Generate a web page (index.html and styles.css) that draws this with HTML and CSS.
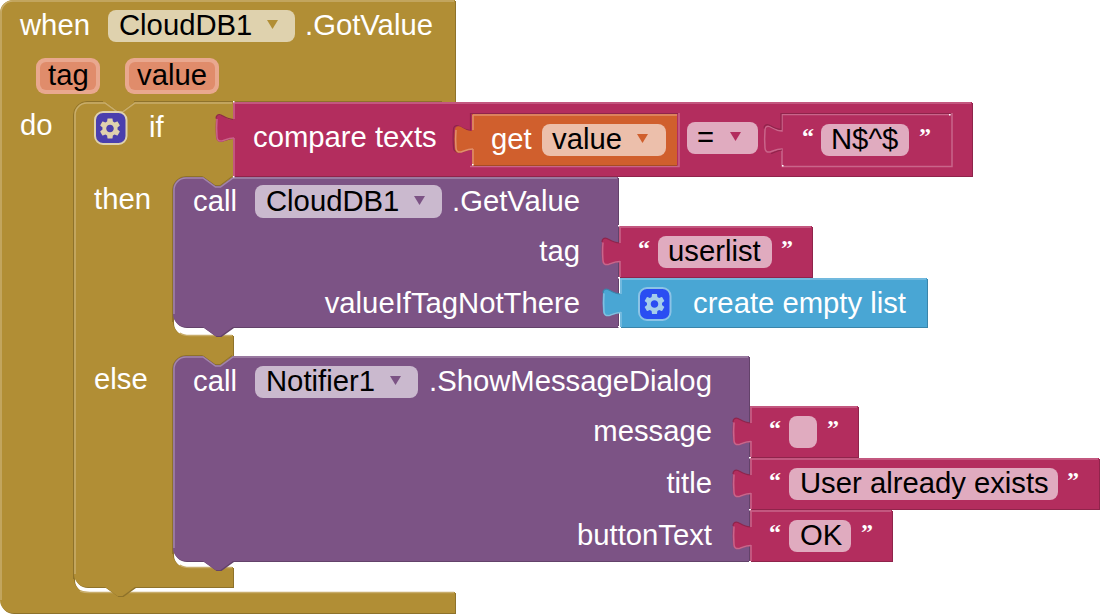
FILE: index.html
```html
<!DOCTYPE html>
<html lang="en">
<head>
<meta charset="utf-8">
<title>CloudDB1.GotValue blocks</title>
<link rel="stylesheet" href="styles.css">
</head>
<body>
<svg class="canvas" width="1100" height="614" viewBox="0 0 1100 614" xmlns="http://www.w3.org/2000/svg">
  <defs>
    <path id="gear" d="M19.14 12.94c.04-.3.06-.61.06-.94 0-.32-.02-.64-.07-.94l2.03-1.58c.18-.14.23-.41.12-.61l-1.92-3.32c-.12-.22-.37-.29-.59-.22l-2.39.96c-.5-.38-1.03-.7-1.62-.94l-.36-2.54c-.04-.24-.24-.41-.48-.41h-3.84c-.24 0-.43.17-.47.41l-.36 2.54c-.59.24-1.13.57-1.62.94l-2.39-.96c-.22-.08-.47 0-.59.22L2.74 8.87c-.12.21-.08.47.12.61l2.03 1.58c-.05.3-.09.63-.09.94s.02.64.07.94l-2.03 1.58c-.18.14-.23.41-.12.61l1.92 3.32c.12.22.37.29.59.22l2.39-.96c.5.38 1.03.7 1.62.94l.36 2.54c.05.24.24.41.48.41h3.84c.24 0 .44-.17.47-.41l.36-2.54c.59-.24 1.13-.56 1.62-.94l2.39.96c.22.08.47 0 .59-.22l1.92-3.32c.12-.22.07-.47-.12-.61l-2.01-1.58zM12 15.6c-1.98 0-3.6-1.62-3.6-3.6s1.62-3.6 3.6-3.6 3.6 1.62 3.6 3.6-1.62 3.6-3.6 3.6z"/>
    <path id="tabLow" d="M0,24 c-5,0 -9,2 -12,3 c-3,.5 -5,-1 -5,-4 c-.5,-6 -.5,-12 0,-18"/>
    <path id="tabUp" d="M-17,5 c0,-3 2,-4.5 5,-3.5 c3,1.5 7,4.5 12,4.5"/>
    <path id="when" d="M0,13 A13,13 0 0 1 13,0 H455 V102 H135 l-12.5,9 h-5 l-12.5,-9 H87 A13,13 0 0 0 74,115 V579 A13,13 0 0 0 87,592 H455 V613 H13 A13,13 0 0 1 0,600 Z"/>
    <path id="ifb" d="M74,115 A13,13 0 0 1 87,102 H105 l12.5,9 h5 l12.5,-9 H233 V177 l-12.5,9 h-5 l-12.5,-9 H186 A13,13 0 0 0 173,190 V322 A13,13 0 0 0 186,335 H233 V356 l-12.5,9 h-5 l-12.5,-9 H186 A13,13 0 0 0 173,369 V554 A13,13 0 0 0 186,567 H233 V587 H135 l-12.5,9 h-5 l-12.5,-9 H87 A13,13 0 0 1 74,574 Z"/>
    <path id="call1" d="M173,190 A13,13 0 0 1 186,177 H203 l12.5,9 h5 l12.5,-9 H618 V327 H233 l-12.5,9 h-5 l-12.5,-9 H186 A13,13 0 0 1 173,314 Z"/>
    <path id="call2" d="M173,369 A13,13 0 0 1 186,356 H203 l12.5,9 h5 l12.5,-9 H749 V561 H233 l-12.5,9 h-5 l-12.5,-9 H186 A13,13 0 0 1 173,548 Z"/>
    <path id="compare" d="M233,102 H972 V176 H233 V138 c-5,0 -9,2 -12,3 c-3,.5 -5,-1 -5,-4 c-.5,-6 -.5,-12 0,-18 c0,-3 2,-4.5 5,-3.5 c3,1.5 7,4.5 12,4.5 Z"/>
    <path id="getb" d="M472,114 H677 V165 H472 V149 c-5,0 -9,2 -12,3 c-3,.5 -5,-1 -5,-4 c-.5,-6 -.5,-12 0,-18 c0,-3 2,-4.5 5,-3.5 c3,1.5 7,4.5 12,4.5 Z"/>
    <path id="userlist" d="M619,226 H812 V277 H619 V261 c-5,0 -9,2 -12,3 c-3,.5 -5,-1 -5,-4 c-.5,-6 -.5,-12 0,-18 c0,-3 2,-4.5 5,-3.5 c3,1.5 7,4.5 12,4.5 Z"/>
    <path id="listb" d="M620,278 H927 V327 H620 V312 c-5,0 -9,2 -12,3 c-3,.5 -5,-1 -5,-4 c-.5,-6 -.5,-12 0,-18 c0,-3 2,-4.5 5,-3.5 c3,1.5 7,4.5 12,4.5 Z"/>
    <path id="msg" d="M750,406 H858 V457 H750 V441 c-5,0 -9,2 -12,3 c-3,.5 -5,-1 -5,-4 c-.5,-6 -.5,-12 0,-18 c0,-3 2,-4.5 5,-3.5 c3,1.5 7,4.5 12,4.5 Z"/>
    <path id="title" d="M750,458 H1099 V509 H750 V493 c-5,0 -9,2 -12,3 c-3,.5 -5,-1 -5,-4 c-.5,-6 -.5,-12 0,-18 c0,-3 2,-4.5 5,-3.5 c3,1.5 7,4.5 12,4.5 Z"/>
    <path id="ok" d="M750,510 H892 V561 H750 V545 c-5,0 -9,2 -12,3 c-3,.5 -5,-1 -5,-4 c-.5,-6 -.5,-12 0,-18 c0,-3 2,-4.5 5,-3.5 c3,1.5 7,4.5 12,4.5 Z"/>
  </defs>

  <!-- when block -->
  <use href="#when" class="gold-dark" transform="translate(1,1)"/>
  <use href="#when" class="gold"/>
  <path class="gold-hl" d="M1,13 A12,12 0 0 1 13,1 H454 M1,13 V600"/>
  <path class="gold-hl" d="M80,591 Q84,592.5 90,592.5 H454"/>
  <path class="gold-edge" d="M134,101.5 H442 M103,101.5 H87 A13.5,13.5 0 0 0 73.5,115 V579"/>

  <!-- if block -->
  <use href="#ifb" class="gold-dark" transform="translate(1,1)"/>
  <use href="#ifb" class="gold"/>
  <path class="gold-hl" d="M75,574 V115 A12,12 0 0 1 87,103 H105 l12.5,9 h5 l12.5,-9 H232"/>
  <path class="gold-hl" d="M180,333 Q183,335.5 190,335.5 H232 M180,565 Q183,567.5 190,567.5 H232"/>
  <path class="gold-edge" d="M232,176.5 l-12,9 h-5 l-12.5,-9 H186 A13.5,13.5 0 0 0 172.5,190 V322 M232,355.5 l-12,9 h-5 l-12.5,-9 H186 A13.5,13.5 0 0 0 172.5,369 V554"/>

  <text class="t t-w" x="20" y="35">when</text>
  <rect class="fld-gold" x="108" y="10" width="187" height="32" rx="8"/>
  <text class="t t-b" x="119" y="35">CloudDB1</text>
  <path class="tri-gold" d="M267,20 h11 l-5.5,9 Z"/>
  <text class="t t-w" x="305" y="35">.GotValue</text>

  <rect class="param-o" x="36" y="58" width="64" height="36" rx="9"/>
  <rect class="param-i" x="40" y="62" width="56" height="28" rx="6"/>
  <text class="t t-b" x="48" y="85">tag</text>
  <rect class="param-o" x="125" y="58" width="94" height="36" rx="9"/>
  <rect class="param-i" x="129" y="62" width="86" height="28" rx="6"/>
  <text class="t t-b" x="137" y="85">value</text>

  <text class="t t-w" x="20" y="135">do</text>
  <rect class="mut mut-gold" x="95" y="112" width="31.5" height="32" rx="8"/>
  <use href="#gear" class="gear-gold" transform="translate(110,128.5) scale(1.05) translate(-12,-12)"/>
  <text class="t t-w" x="149" y="137">if</text>
  <text class="t t-w" x="94" y="209">then</text>
  <text class="t t-w" x="94" y="389">else</text>

  <!-- compare texts -->
  <use href="#compare" class="mag-dark" transform="translate(1,1)"/>
  <use href="#compare" class="mag"/>
  <path class="mag-hl" d="M233,103 H971 M234,103 V119 M234,138 V176"/>
  <use href="#tabLow" class="mag-hl" transform="translate(234,114)"/>
  <use href="#tabUp" class="mag-edge" transform="translate(233,113.5)"/>
  <text class="t t-w" x="253" y="147">compare texts</text>

  <!-- socket holding the get block -->
  <path class="mag-edge" d="M678,113.5 H470.5 V130.5 c-5,0 -9,-3 -12,-4.5 c-3,-1 -5,.5 -5,3.5 c-.5,6 -.5,12 0,18 c0,3 2,4.5 5,4"/>
  <path class="mag-hl" d="M679,113 V166.5 H470"/>

  <!-- get -->
  <use href="#getb" class="or-dark" transform="translate(0,1)"/>
  <use href="#getb" class="or"/>
  <path class="or-hl" d="M473,115 H677 M473,115 V130 M473,149 V165"/>
  <use href="#tabLow" class="or-hl" transform="translate(473,125)"/>
  <text class="t t-w" x="491" y="149">get</text>
  <rect class="fld-or" x="542" y="124" width="124" height="32" rx="8"/>
  <text class="t t-b" x="552" y="149">value</text>
  <path class="tri-or" d="M637,134 h11 l-5.5,9 Z"/>

  <rect class="fld-mag" x="687" y="122" width="71" height="32" rx="8"/>
  <text class="t t-b" x="697" y="147">=</text>
  <path class="tri-mag" d="M730,132 h11 l-5.5,9 Z"/>

  <!-- socket behind the text block -->
  <path class="mag-hl" d="M782,166 V149 c-5,0 -9,2 -12,3 c-3,.5 -5,-1 -5,-4 c-.5,-6 -.5,-12 0,-18 c0,-3 2,-4.5 5,-3.5 c3,1.5 7,4.5 12,4.5 V114.5 H951"/>
  <path class="mag-edge" d="M951,113.5 H781 V129.5 c-5,0 -9,-3 -12,-4.5 c-3,-1 -5,.5 -5,3.5"/>
  <path class="mag-edge" d="M771,153.5 c3,-1 7,-3 11,-3.5"/>
  <path class="mag-hl" d="M781.5,166.5 H952 V113"/>
  <text class="q" x="802" y="144">“</text>
  <rect class="fld-mag" x="821" y="124" width="88" height="32" rx="8"/>
  <text class="t t-b" x="831" y="149">N$^$</text>
  <text class="q" x="919" y="144">”</text>

  <!-- call CloudDB1.GetValue -->
  <use href="#call1" class="pur-dark" transform="translate(1,1)"/>
  <use href="#call1" class="pur"/>
  <path class="pur-hl" d="M174,314 V190 A12,12 0 0 1 186,178 H203 l12.5,9 h5 l12.5,-9 H617"/>
  <text class="t t-w" x="193" y="211">call</text>
  <rect class="fld-pur" x="255" y="185" width="187" height="33" rx="8"/>
  <text class="t t-b" x="266" y="211">CloudDB1</text>
  <path class="tri-pur" d="M414,196 h11 l-5.5,9 Z"/>
  <text class="t t-w" x="452" y="211">.GetValue</text>
  <text class="t t-w t-end" x="580" y="261">tag</text>
  <text class="t t-w t-end" x="580" y="313">valueIfTagNotThere</text>

  <use href="#userlist" class="mag-dark" transform="translate(1,1)"/>
  <use href="#userlist" class="mag"/>
  <path class="mag-hl" d="M619,227 H811 M620,227 V243 M620,261 V277"/>
  <use href="#tabLow" class="mag-hl" transform="translate(620,237.5)"/>
  <use href="#tabUp" class="mag-edge" transform="translate(619,237)"/>
  <text class="q" x="638" y="256">“</text>
  <rect class="fld-mag" x="658" y="236" width="114" height="32" rx="8"/>
  <text class="t t-b" x="668" y="261">userlist</text>
  <text class="q" x="781" y="256">”</text>

  <use href="#listb" class="blu-dark" transform="translate(1,1)"/>
  <use href="#listb" class="blu"/>
  <path class="blu-hl" d="M620,279 H926 M621,279 V294 M621,312 V327"/>
  <use href="#tabLow" class="blu-hl" transform="translate(621,288.5)"/>
  <use href="#tabUp" class="blu-edge" transform="translate(620,288)"/>
  <rect class="mut mut-blu" x="639" y="288" width="31.5" height="32" rx="8"/>
  <use href="#gear" class="gear-blu" transform="translate(654.5,304) scale(1.05) translate(-12,-12)"/>
  <text class="t t-w" x="693" y="313">create empty list</text>

  <!-- call Notifier1.ShowMessageDialog -->
  <use href="#call2" class="pur-dark" transform="translate(1,1)"/>
  <use href="#call2" class="pur"/>
  <path class="pur-hl" d="M174,548 V369 A12,12 0 0 1 186,357 H203 l12.5,9 h5 l12.5,-9 H748"/>
  <text class="t t-w" x="193" y="391">call</text>
  <rect class="fld-pur" x="255" y="366" width="163" height="32" rx="8"/>
  <text class="t t-b" x="266" y="391">Notifier1</text>
  <path class="tri-pur" d="M390,376 h11 l-5.5,9 Z"/>
  <text class="t t-w" x="429" y="391">.ShowMessageDialog</text>
  <text class="t t-w t-end" x="712" y="441">message</text>
  <text class="t t-w t-end" x="712" y="493">title</text>
  <text class="t t-w t-end" x="712" y="545">buttonText</text>

  <use href="#msg" class="mag-dark" transform="translate(1,1)"/>
  <use href="#msg" class="mag"/>
  <path class="mag-hl" d="M750,407 H857 M751,407 V423 M751,441 V457"/>
  <use href="#tabLow" class="mag-hl" transform="translate(751,417.5)"/>
  <use href="#tabUp" class="mag-edge" transform="translate(750,417)"/>
  <text class="q" x="769" y="436">“</text>
  <rect class="fld-mag" x="789" y="416" width="28" height="32" rx="8"/>
  <text class="q" x="827" y="436">”</text>

  <use href="#title" class="mag-dark" transform="translate(1,1)"/>
  <use href="#title" class="mag"/>
  <path class="mag-hl" d="M750,459 H1098 M751,459 V475 M751,493 V509"/>
  <use href="#tabLow" class="mag-hl" transform="translate(751,469.5)"/>
  <use href="#tabUp" class="mag-edge" transform="translate(750,469)"/>
  <text class="q" x="769" y="488">“</text>
  <rect class="fld-mag" x="789" y="468" width="269" height="32" rx="8"/>
  <text class="t t-b" x="800" y="493">User already exists</text>
  <text class="q" x="1067" y="488">”</text>

  <use href="#ok" class="mag-dark" transform="translate(1,1)"/>
  <use href="#ok" class="mag"/>
  <path class="mag-hl" d="M750,511 H891 M751,511 V527 M751,545 V561"/>
  <use href="#tabLow" class="mag-hl" transform="translate(751,521.5)"/>
  <use href="#tabUp" class="mag-edge" transform="translate(750,521)"/>
  <text class="q" x="769" y="540">“</text>
  <rect class="fld-mag" x="789" y="520" width="62" height="32" rx="8"/>
  <text class="t t-b" x="800" y="545">OK</text>
  <text class="q" x="861" y="540">”</text>

  <g class="dots">
    <rect x="233" y="101" width="1.5" height="1.5"/>
    <rect x="233" y="176" width="1.5" height="1.5"/>
    <rect x="618" y="225" width="1.5" height="1.5"/>
    <rect x="618" y="277" width="1.5" height="1.5"/>
    <rect x="618" y="326" width="1.5" height="1.5"/>
    <rect x="472" y="164" width="1.5" height="1.5"/>
    <rect x="782" y="165" width="1.5" height="1.5"/>
    <rect x="949" y="114" width="1.5" height="1.5"/>
    <rect x="749" y="457" width="1.5" height="1.5"/>
    <rect x="749" y="509" width="1.5" height="1.5"/>
    <rect x="749" y="561" width="1.5" height="1.5"/>
  </g>
</svg>
</body>
</html>
```
FILE: styles.css
```css
html, body {
  margin: 0;
  padding: 0;
  background: #ffffff;
}

.canvas {
  display: block;
}

.t {
  font-family: "Liberation Sans", Arial, sans-serif;
  font-size: 29.25px;
}
.t-w { fill: #ffffff; }
.t-b { fill: #000000; }
.t-end { text-anchor: end; }

.q {
  font-family: "Liberation Serif", "Times New Roman", serif;
  font-weight: bold;
  font-size: 24px;
  fill: #ffffff;
}

.gold { fill: #b18e35; }
.gold-dark { fill: #8e722a; }
.gold-hl { fill: none; stroke: #c8ad6c; stroke-width: 1.5; }
.gold-edge { fill: none; stroke: #8e722a; stroke-width: 1; }

.mag { fill: #b32d5e; }
.mag-dark { fill: #8f244b; }
.mag-hl { fill: none; stroke: #c9658a; stroke-width: 1.5; }
.mag-edge { fill: none; stroke: #8f244b; stroke-width: 1.2; }

.or { fill: #d05f2d; }
.or-dark { fill: #a64c24; }
.or-hl { fill: none; stroke: #e08f6c; stroke-width: 1.5; }

.pur { fill: #7c5385; }
.pur-dark { fill: #63426a; }
.pur-hl { fill: none; stroke: #a387a9; stroke-width: 1.5; }

.blu { fill: #49a6d4; }
.blu-dark { fill: #3a85aa; }
.blu-hl { fill: none; stroke: #7fc0e1; stroke-width: 1.5; }
.blu-edge { fill: none; stroke: #3a85aa; stroke-width: 1.2; }

.fld-gold { fill: #dfd2ae; }
.fld-or { fill: #ecbfab; }
.fld-mag { fill: #e0abbf; }
.fld-pur { fill: #cab9ce; }

.tri-gold { fill: #b18e35; }
.tri-or { fill: #d05f2d; }
.tri-mag { fill: #b32d5e; }
.tri-pur { fill: #7c5385; }

.param-o { fill: #e9a88f; }
.param-i { fill: #e08c6b; }

.mut { stroke-width: 2; }
.mut-gold { fill: #4a3fae; stroke: #dfd2ae; }
.mut-blu { fill: #2a4df2; stroke: #8cc3e6; }
.gear-gold { fill: #dfd2ae; fill-rule: evenodd; }
.gear-blu { fill: #a4cdea; fill-rule: evenodd; }

.dots { fill: #ffffff; }
```
